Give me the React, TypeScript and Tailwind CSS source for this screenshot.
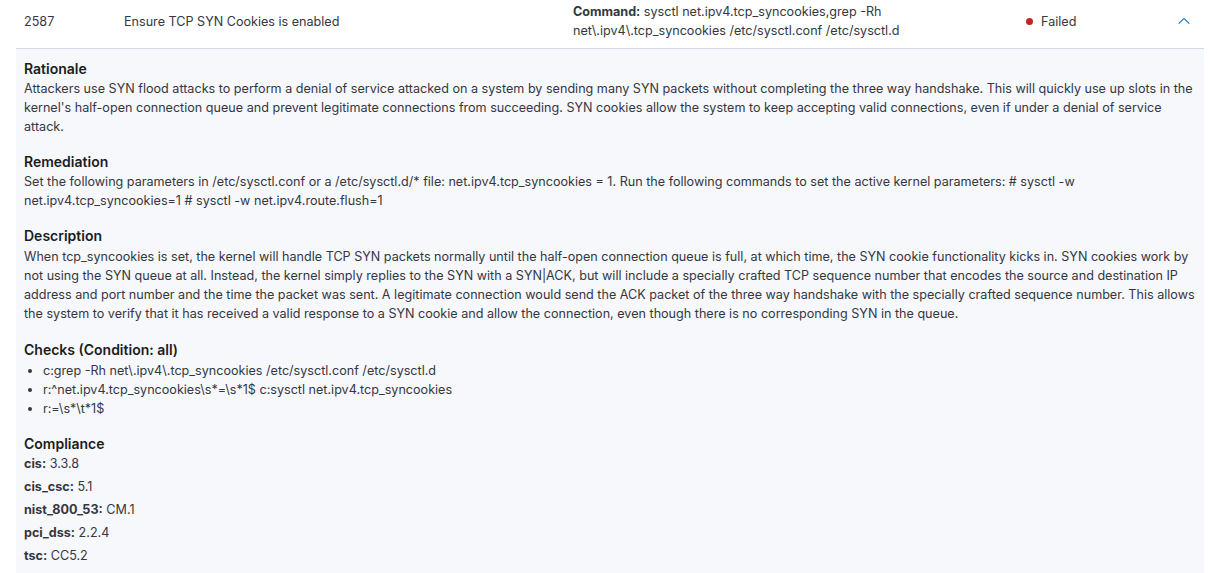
import React from 'react';

const RATIONALE =
  "Attackers use SYN flood attacks to perform a denial of service attacked on a system by sending many SYN packets without completing the three way handshake. This will quickly use up slots in the kernel's half-open connection queue and prevent legitimate connections from succeeding. SYN cookies allow the system to keep accepting valid connections, even if under a denial of service attack.";

const REMEDIATION =
  'Set the following parameters in /etc/sysctl.conf or a /etc/sysctl.d/* file: net.ipv4.tcp_syncookies = 1. Run the following commands to set the active kernel parameters: # sysctl -w net.ipv4.tcp_syncookies=1 # sysctl -w net.ipv4.route.flush=1';

const DESCRIPTION =
  'When tcp_syncookies is set, the kernel will handle TCP SYN packets normally until the half-open connection queue is full, at which time, the SYN cookie functionality kicks in. SYN cookies work by not using the SYN queue at all. Instead, the kernel simply replies to the SYN with a SYN|ACK, but will include a specially crafted TCP sequence number that encodes the source and destination IP address and port number and the time the packet was sent. A legitimate connection would send the ACK packet of the three way handshake with the specially crafted sequence number. This allows the system to verify that it has received a valid response to a SYN cookie and allow the connection, even though there is no corresponding SYN in the queue.';

const CHECKS = [
  'c:grep -Rh net\\.ipv4\\.tcp_syncookies /etc/sysctl.conf /etc/sysctl.d',
  'r:^net.ipv4.tcp_syncookies\\s*=\\s*1$ c:sysctl net.ipv4.tcp_syncookies',
  'r:=\\s*\\t*1$',
];

const COMPLIANCE: [string, string][] = [
  ['cis', '3.3.8'],
  ['cis_csc', '5.1'],
  ['nist_800_53', 'CM.1'],
  ['pci_dss', '2.2.4'],
  ['tsc', 'CC5.2'],
];

const Section = ({
  title,
  className = 'mb-[16px]',
  children,
}: {
  title: string;
  className?: string;
  children: React.ReactNode;
}) => (
  <div className={className}>
    <h4 className="text-[14px] font-semibold leading-[20px] text-[#1a1c21]">{title}</h4>
    {children}
  </div>
);

export default function App() {
  return (
    <div
      className="min-h-screen bg-white pl-4 pr-[7px] text-[12.6px] leading-[19px] text-[#343741]"
      style={{ fontFamily: 'Inter, "Noto Sans", sans-serif' }}
    >
      <div className="flex h-[49px] items-center border-b border-[#d3dae6] pb-[6px]">
        <div className="w-[108px] pl-2">2587</div>
        <div className="w-[449px]">Ensure TCP SYN Cookies is enabled</div>
        <div className="w-[453px]">
          <span className="font-bold text-[#343741]">Command:</span> sysctl net.ipv4.tcp_syncookies,grep -Rh
          <br />
          net\.ipv4\.tcp_syncookies /etc/sysctl.conf /etc/sysctl.d
        </div>
        <div className="flex flex-1 items-center gap-[8px]">
          <span className="h-[7px] w-[7px] rounded-full bg-[#bd271e]" />
          <span>Failed</span>
        </div>
        <div className="flex w-[40px] justify-center">
          <svg width="14" height="14" viewBox="0 0 16 16" fill="none">
            <path d="M2 11 L8 5 L14 11" stroke="#006bb8" strokeWidth="1.2" />
          </svg>
        </div>
      </div>
      <div className="bg-[#f7f8fc] px-2 pb-[8px] pt-[10px]">
        <Section title="Rationale">
          <p>{RATIONALE}</p>
        </Section>
        <Section title="Remediation">
          <p>{REMEDIATION}</p>
        </Section>
        <Section title="Description" className="mb-[17px]">
          <p className="pt-[1px]">{DESCRIPTION}</p>
        </Section>
        <Section title="Checks (Condition: all)">
          <ul className="mt-[1px] list-disc pl-[19px]">
            {CHECKS.map((check) => (
              <li key={check}>{check}</li>
            ))}
          </ul>
        </Section>
        <div>
          <h4 className="text-[14px] font-semibold leading-[20px] text-[#1a1c21]">Compliance</h4>
          {COMPLIANCE.map(([key, value]) => (
            <p key={key} className="mb-[4px]">
              <span className="font-bold">{key}:</span> {value}
            </p>
          ))}
        </div>
      </div>
    </div>
  );
}
